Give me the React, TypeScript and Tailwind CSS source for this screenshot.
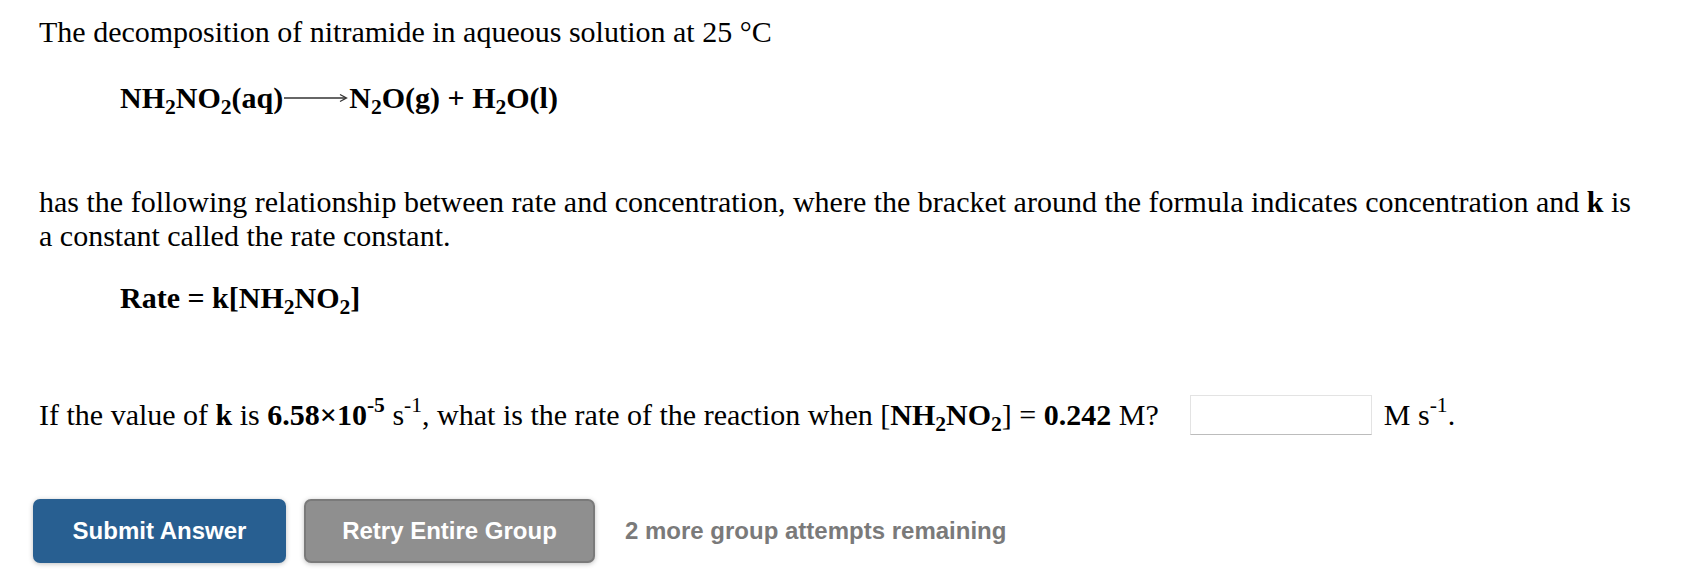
import React from "react";

const serif = { fontFamily: '"Liberation Serif", "Times New Roman", serif' };

function Sub({ children }: { children: React.ReactNode }) {
  return <sub className="text-[0.72em] relative top-[0.28em] align-baseline leading-none">{children}</sub>;
}
function Sup({ children }: { children: React.ReactNode }) {
  return <sup className="text-[0.72em] relative -top-[0.6em] align-baseline leading-none">{children}</sup>;
}

function Arrow() {
  return (
    <svg width="64" height="14" viewBox="0 0 64 14" className="inline-block align-middle mx-[1px] -mt-[6px]">
      <line x1="0" y1="7" x2="62" y2="7" stroke="#333" strokeWidth="1.5" />
      <path d="M56 3.5 L62.5 7 L56 10.5" fill="none" stroke="#333" strokeWidth="1.3" />
    </svg>
  );
}

export default function App() {
  return (
    <div className="w-[1692px] h-[586px] bg-white text-black relative overflow-hidden">
      <div className="pl-[39px] pt-[15px] text-[30px] leading-[34px]" style={serif}>
        <p className="whitespace-nowrap">The decomposition of nitramide in aqueous solution at 25 °C</p>
        <p className="mt-[32px] ml-[81px] font-bold whitespace-nowrap">
          NH<Sub>2</Sub>NO<Sub>2</Sub>(aq)<Arrow />N<Sub>2</Sub>O(g) + H<Sub>2</Sub>O(l)
        </p>
        <p className="mt-[70px] whitespace-nowrap">
          has the following relationship between rate and concentration, where the bracket around the formula indicates concentration and <b>k</b> is
          <br />
          a constant called the rate constant.
        </p>
        <p className="mt-[28px] ml-[81px] font-bold whitespace-nowrap">
          Rate = k[NH<Sub>2</Sub>NO<Sub>2</Sub>]
        </p>
        <div className="mt-[80px] flex items-center whitespace-nowrap">
          <span>
            If the value of <b>k</b> is <b>6.58×10<Sup>-5</Sup></b> s<Sup>-1</Sup>, what is the rate of the reaction when [<b>NH<Sub>2</Sub>NO<Sub>2</Sub></b>] = <b>0.242</b> M?
          </span>
          <div className="ml-[31px] w-[182px] h-[40px] border border-[#e3e3e3] border-b-[#bcbcbc] bg-white shrink-0" />
          <span className="ml-[12px]">
            M s<Sup>-1</Sup>.
          </span>
        </div>
      </div>
      <div
        className="flex items-center mt-[64px] pl-[33px]"
        style={{ fontFamily: '"Liberation Sans", Arial, Helvetica, sans-serif' }}
      >
        <button className="w-[253px] h-[64px] rounded-[7px] bg-[#285f91] text-white text-[24px] font-bold shadow-[0_1px_5px_rgba(0,0,0,0.25)]">
          Submit Answer
        </button>
        <button className="ml-[18px] w-[291px] h-[64px] rounded-[7px] bg-[#8f8f8f] border-2 border-[#7a7a7a] text-white text-[24px] font-bold shadow-[0_1px_5px_rgba(0,0,0,0.25)]">
          Retry Entire Group
        </button>
        <span className="ml-[30px] text-[24px] font-bold text-[#7a7a7a] whitespace-nowrap">2 more group attempts remaining</span>
      </div>
    </div>
  );
}
